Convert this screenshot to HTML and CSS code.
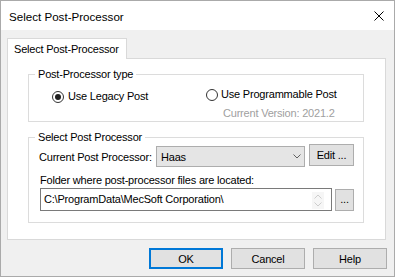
FILE: index.html
```html
<!DOCTYPE html>
<html>
<head>
<meta charset="utf-8">
<link rel="stylesheet" href="styles.css">
</head>
<body>
<div class="window">
  <div class="titlebar">
    <span class="title">Select Post-Processor</span>
    <svg class="close" width="10" height="10" viewBox="0 0 10 10"><path d="M0.5 0.5 L9.5 9.5 M9.5 0.5 L0.5 9.5" stroke="#000" stroke-width="1" fill="none"/></svg>
  </div>
  <div class="content">
    <div class="tabstrip">
      <div class="tab">Select Post-Processor</div>
      <div class="tabfill"></div>
    </div>
    <div class="panel">
      <fieldset class="group group-type">
        <legend class="legend">Post-Processor type</legend>
        <div class="type-body">
          <label class="radio legacy"><span class="circle checked"></span><span>Use Legacy Post</span></label>
          <div class="prog-col">
            <label class="radio"><span class="circle"></span><span>Use Programmable Post</span></label>
            <div class="version">Current Version: 2021.2</div>
          </div>
        </div>
      </fieldset>
      <fieldset class="group group-post">
        <legend class="legend">Select Post Processor</legend>
        <div class="post-body">
          <div class="row-current">
            <span class="cur-label">Current Post Processor:</span>
            <div class="combo"><span class="combo-text">Haas</span><svg class="chev" width="8" height="5" viewBox="0 0 8 5"><path d="M0.5 0.5 L4 4 L7.5 0.5" stroke="#606060" stroke-width="1" fill="none"/></svg></div>
            <div class="btn edit">Edit ...</div>
          </div>
          <div class="folder-label">Folder where post-processor files are located:</div>
          <div class="row-folder">
            <div class="field">
              <span class="field-text">C:\ProgramData\MecSoft Corporation\</span>
              <div class="scroll">
                <svg width="8" height="5" viewBox="0 0 8 5"><path d="M0.5 4.5 L4 1 L7.5 4.5" stroke="#cdcdcd" stroke-width="1" fill="none"/></svg>
                <svg width="8" height="5" viewBox="0 0 8 5"><path d="M0.5 0.5 L4 4 L7.5 0.5" stroke="#cdcdcd" stroke-width="1" fill="none"/></svg>
              </div>
            </div>
            <div class="btn browse">...</div>
          </div>
        </div>
      </fieldset>
    </div>
    <div class="buttons">
      <div class="btn dlg default">OK</div>
      <div class="btn dlg">Cancel</div>
      <div class="btn dlg">Help</div>
    </div>
  </div>
</div>
</body>
</html>
```
FILE: styles.css
```css
html, body { margin: 0; padding: 0; background: #fff; }

.window {
  width: 395px;
  height: 277px;
  box-sizing: border-box;
  border: 1px solid #aaaaaa;
  background: #f0f0f0;
  display: flex;
  flex-direction: column;
  font-family: "Liberation Sans", Arial, sans-serif;
  font-size: 11px;
  letter-spacing: -0.2px;
  color: #000;
}

.titlebar {
  height: 29px;
  flex: none;
  background: #fff;
  display: flex;
  align-items: center;
  justify-content: space-between;
  padding: 0 10px 0 8px;
}
.title { font-size: 11.6px; letter-spacing: 0; padding-top: 1px; }
.close { display: block; }

.content {
  flex: 1;
  display: flex;
  flex-direction: column;
  padding: 8px 8px 7px 6px;
}

.tabstrip { display: flex; height: 21px; flex: none; }
.tab {
  width: 120px;
  box-sizing: border-box;
  border: 1px solid #d9d9d9;
  border-bottom: none;
  background: #fff;
  padding-left: 6px;
  line-height: 20px;
}
.tabfill { flex: 1; border-bottom: 1px solid #d9d9d9; }

.panel {
  height: 181px;
  flex: none;
  box-sizing: border-box;
  background: #fff;
  border: 1px solid #d9d9d9;
  border-top: none;
  padding: 9px 21px 0 20px;
}

.group {
  margin: 0;
  padding: 0;
  border: 1px solid #dcdcdc;
  min-width: 0;
}
.legend {
  line-height: 13px;
  padding: 0 3px;
  margin-left: 6px;
}

.type-body {
  height: 40px;
  display: flex;
  align-items: flex-start;
  padding-left: 23px;
  padding-top: 7px;
  box-sizing: border-box;
}
.radio { display: flex; align-items: center; line-height: 13px; gap: 3px; }
.legacy { flex: 0 0 154px; margin-top: 2px; gap: 4px; }
.circle {
  width: 12px;
  height: 12px;
  box-sizing: border-box;
  border: 1px solid #333;
  border-radius: 50%;
  background: #fff;
  display: flex;
  align-items: center;
  justify-content: center;
}
.circle.checked::after {
  content: "";
  width: 6px;
  height: 6px;
  border-radius: 50%;
  background: #1f1f1f;
}
.version { color: #a0a0a0; line-height: 13px; margin-top: 6px; margin-left: 17px; }

.group-post { margin-top: 9px; }
.post-body {
  height: 78px;
  box-sizing: border-box;
  padding: 0 9px 0 11px;
}
.row-current { display: flex; align-items: flex-start; height: 23px; }
.cur-label { flex: 0 0 117px; line-height: 13px; margin-top: 7px; margin-left: -1px; }
.combo {
  flex: 1;
  height: 21px;
  margin-top: 2px;
  box-sizing: border-box;
  background: #e5e5e5;
  border: 1px solid #adadad;
  display: flex;
  align-items: center;
  justify-content: space-between;
  padding: 0 3px 0 4px;
}
.chev { display: block; }
.btn {
  box-sizing: border-box;
  background: #e1e1e1;
  border: 1px solid #adadad;
  display: flex;
  align-items: center;
  justify-content: center;
}
.edit { width: 45px; height: 22px; margin-left: 4px; }

.folder-label { line-height: 13px; margin-top: 7px; }
.row-folder { display: flex; align-items: flex-start; margin-top: 1px; }
.field {
  width: 292px;
  height: 23px;
  box-sizing: border-box;
  border: 1px solid #7a7a7a;
  background: #fff;
  display: flex;
  justify-content: space-between;
  padding-left: 3px;
}
.field-text { line-height: 13px; margin-top: 4px; }
.scroll {
  width: 12px;
  margin: 3px 7px 1px 0;
  background: #f6f6f6;
  display: flex;
  flex-direction: column;
  align-items: center;
  justify-content: space-around;
}
.scroll svg { display: block; }
.browse { width: 19px; height: 22px; margin-left: 3px; margin-top: 1px; align-items: flex-end; padding-bottom: 5px; }

.buttons {
  display: flex;
  justify-content: flex-end;
  gap: 8px;
  margin-top: 8px;
  margin-right: -1px;
}
.dlg { width: 74px; height: 21px; }
.default { border: 2px solid #0078d7; }
```
